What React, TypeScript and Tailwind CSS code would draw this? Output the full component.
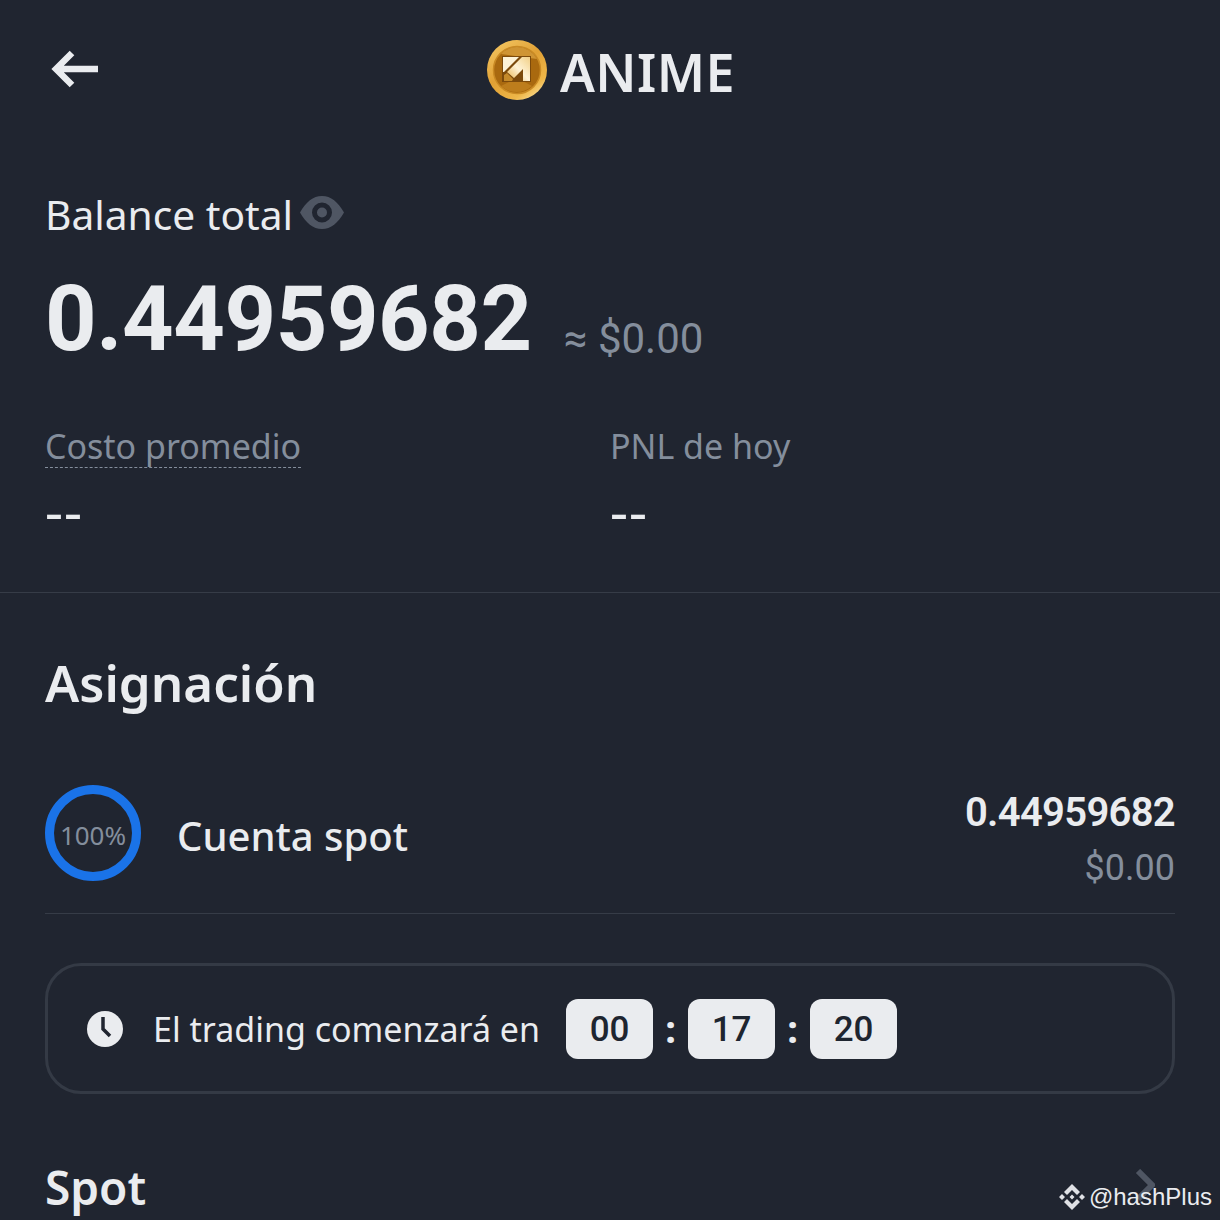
const plex = "font-['Noto_Sans','Open_Sans',sans-serif]";
const din = "font-['Roboto','Liberation_Sans',sans-serif]";

function CoinLogo() {
  return (
    <svg width="60" height="60" viewBox="0 0 60 60" className="-mt-[4px] ml-[2px] shrink-0">
      <defs>
        <linearGradient id="rim" x1="0.15" y1="0" x2="0.85" y2="1">
          <stop offset="0" stopColor="#f4c662" />
          <stop offset="0.45" stopColor="#e0a034" />
          <stop offset="0.8" stopColor="#eeb648" />
          <stop offset="1" stopColor="#fbe3a0" />
        </linearGradient>
        <linearGradient id="band" x1="0" y1="1" x2="1" y2="0">
          <stop offset="0" stopColor="#e9b24a" />
          <stop offset="0.5" stopColor="#fff3d6" />
          <stop offset="1" stopColor="#f1cf86" />
        </linearGradient>
      </defs>
      <circle cx="30" cy="30" r="30" fill="url(#rim)" />
      <circle cx="30" cy="30" r="23.500" fill="#a9690f" stroke="#c98a24" strokeWidth="1.500" />
      <path d="M30 7a23 23 0 0 1 20 12L14 14a23 23 0 0 1 16-7z" fill="#cf9433" />
      <path d="M14 46a23 23 0 0 0 31 0L30 38z" fill="#bd7d1c" />
      <rect x="15" y="16" width="29" height="26" fill="#7c4a0b" />
      <path d="M16 17h16L17 32h-1z" fill="#fdf2d6" />
      <path d="M35 17h8v24h-7V29l-9 9-7-6z" fill="url(#band)" />
      <path d="M17 35l3-2 6 6-1 2h-8z" fill="#c58a2a" />
    </svg>
  );
}

function Stat({ label, dotted }: { label: string; dotted?: boolean }) {
  return (
    <div>
      <div className="flex h-[42px] items-start">
        <span
          className={`text-[34px] leading-[42px] text-[#848e9c] ${
            dotted ? "border-b border-dashed border-[#848e9c]" : ""
          }`}
        >
          {label}
        </span>
      </div>
      <div className={`mt-[26px] h-[42px] pl-[1px] text-[58px] leading-[42px] font-normal tracking-[3px] text-[#eaecef] ${din}`}>--</div>
    </div>
  );
}

function TimeBox({ value }: { value: string }) {
  return (
    <div className={`flex h-[60px] w-[87px] items-center justify-center rounded-[12px] bg-[#eaecef] pt-[3px] text-[35px] font-medium text-[#1e2530] ${din}`}>
      {value}
    </div>
  );
}

export default function App() {
  return (
    <div className={`relative h-[1220px] w-[1220px] overflow-hidden bg-[#202530] ${plex}`}>
      <header className="relative flex h-[189px] items-start justify-center pt-[39px]">
        <svg width="48" height="38" viewBox="0 0 48 38" className="absolute top-[50px] left-[51px]">
          <path d="M47 19H6M21 3 5 19l16 16" fill="none" stroke="#eaecef" strokeWidth="6.5" />
        </svg>
        <div className="flex items-center gap-[13px]">
          <CoinLogo />
          <span className="text-[52px] leading-[66px] font-semibold tracking-[0.5px] text-[#eaecef]">ANIME</span>
        </div>
      </header>

      <section className="px-[45px]">
        <div className="flex h-[50px] items-center gap-[7px]">
          <span className="text-[40.7px] leading-[50px] text-[#eaecef]">Balance total</span>
          <svg width="44" height="33" viewBox="0 0 44 33" className="mt-[-3px]">
            <path
              fillRule="evenodd"
              d="M22 0c9 0 16 6 22 16.500C38 27 31 33 22 33S6 27 0 16.500C6 6 13 0 22 0zm0 6.500a10 10 0 1 0 0 20 10 10 0 0 0 0-20zm0 5a5 5 0 1 1 0 10 5 5 0 0 1 0-10z"
              fill="#4f5663"
            />
          </svg>
        </div>
        <div className="mt-[31px] flex h-[100px] items-end">
          <span className={`text-[90px] leading-[100px] font-bold tracking-[-0.4px] text-[#eaecef] ${din}`}>0.44959682</span>
          <span className={`mb-[6px] ml-[32px] text-[42px] leading-[50px] text-[#848e9c] ${din}`}>≈ $0.00</span>
        </div>
        <div className="mt-[55px] grid grid-cols-[565px_1fr]">
          <Stat label="Costo promedio" dotted />
          <Stat label="PNL de hoy" />
        </div>
      </section>

      <div className="mt-[57px] h-px bg-[#363c47]" />

      <section className="px-[45px]">
        <h2 className="mt-[54px] text-[51px] leading-[70px] font-semibold text-[#eaecef]">Asignación</h2>
        <div className="mt-[68px] flex items-start justify-between">
          <div className="flex items-center gap-[36px]">
            <div className="flex h-[96px] w-[96px] items-center justify-center rounded-full border-[9px] border-[#1a73e8] pt-[4px] text-[26px] text-[#848e9c]">
              100%
            </div>
            <span className="mt-[6px] text-[40px] font-medium text-[#eaecef]">Cuenta spot</span>
          </div>
          <div className={`mt-[3px] flex flex-col items-end ${din}`}>
            <span className="text-[40px] leading-[50px] font-semibold tracking-[-0.7px] text-[#eaecef]">0.44959682</span>
            <span className="mt-[5px] text-[36px] leading-[50px] text-[#848e9c]">$0.00</span>
          </div>
        </div>
        <div className="mt-[20px] h-px bg-[#363c47]" />

        <div className="mt-[49px] flex h-[131px] items-center rounded-[36px] border-[3px] border-[#343a45] pl-[39px]">
          <svg width="36" height="36" viewBox="0 0 36 36">
            <circle cx="18" cy="18" r="18" fill="#eaecef" />
            <path d="M16 6v12l7 7" fill="none" stroke="#202530" strokeWidth="3.500" />
          </svg>
          <span className="mt-[2px] ml-[30px] text-[34px] text-[#eaecef]">El trading comenzará en</span>
          <div className="ml-[26px] flex items-center gap-[12px]">
            <TimeBox value="00" />
            <span className="w-[11px] text-center text-[38px] font-bold text-[#eaecef]">:</span>
            <TimeBox value="17" />
            <span className="w-[11px] text-center text-[38px] font-bold text-[#eaecef]">:</span>
            <TimeBox value="20" />
          </div>
        </div>

        <div className="mt-[58px] flex items-center justify-between">
          <h2 className="text-[46px] leading-[70px] font-semibold text-[#eaecef]">Spot</h2>
          <svg width="20" height="32" viewBox="0 0 20 32" className="mr-[20px] mb-[4px]">
            <path d="M3 2l14 14L3 30" fill="none" stroke="#4f5663" strokeWidth="6" />
          </svg>
        </div>
      </section>

      {/* watermark sits over the content */}
      <div className="absolute right-[8px] bottom-[8px] flex items-center gap-[3px] font-['Liberation_Sans',sans-serif] text-[24px] leading-[30px] text-[#eaecef]">
        <svg width="28" height="28" viewBox="0 0 28 28">
          <path
            d="M14 1l8 8-3 3-5-5-5 5-3-3zM14 27l8-8-3-3-5 5-5-5-3 3zM4 11l3 3-3 3-3-3zM24 11l3 3-3 3-3-3zM14 11.500l2.500 2.500-2.500 2.500-2.500-2.500z"
            fill="#dfe1e5"
          />
        </svg>
        @hashPlus
      </div>
    </div>
  );
}
